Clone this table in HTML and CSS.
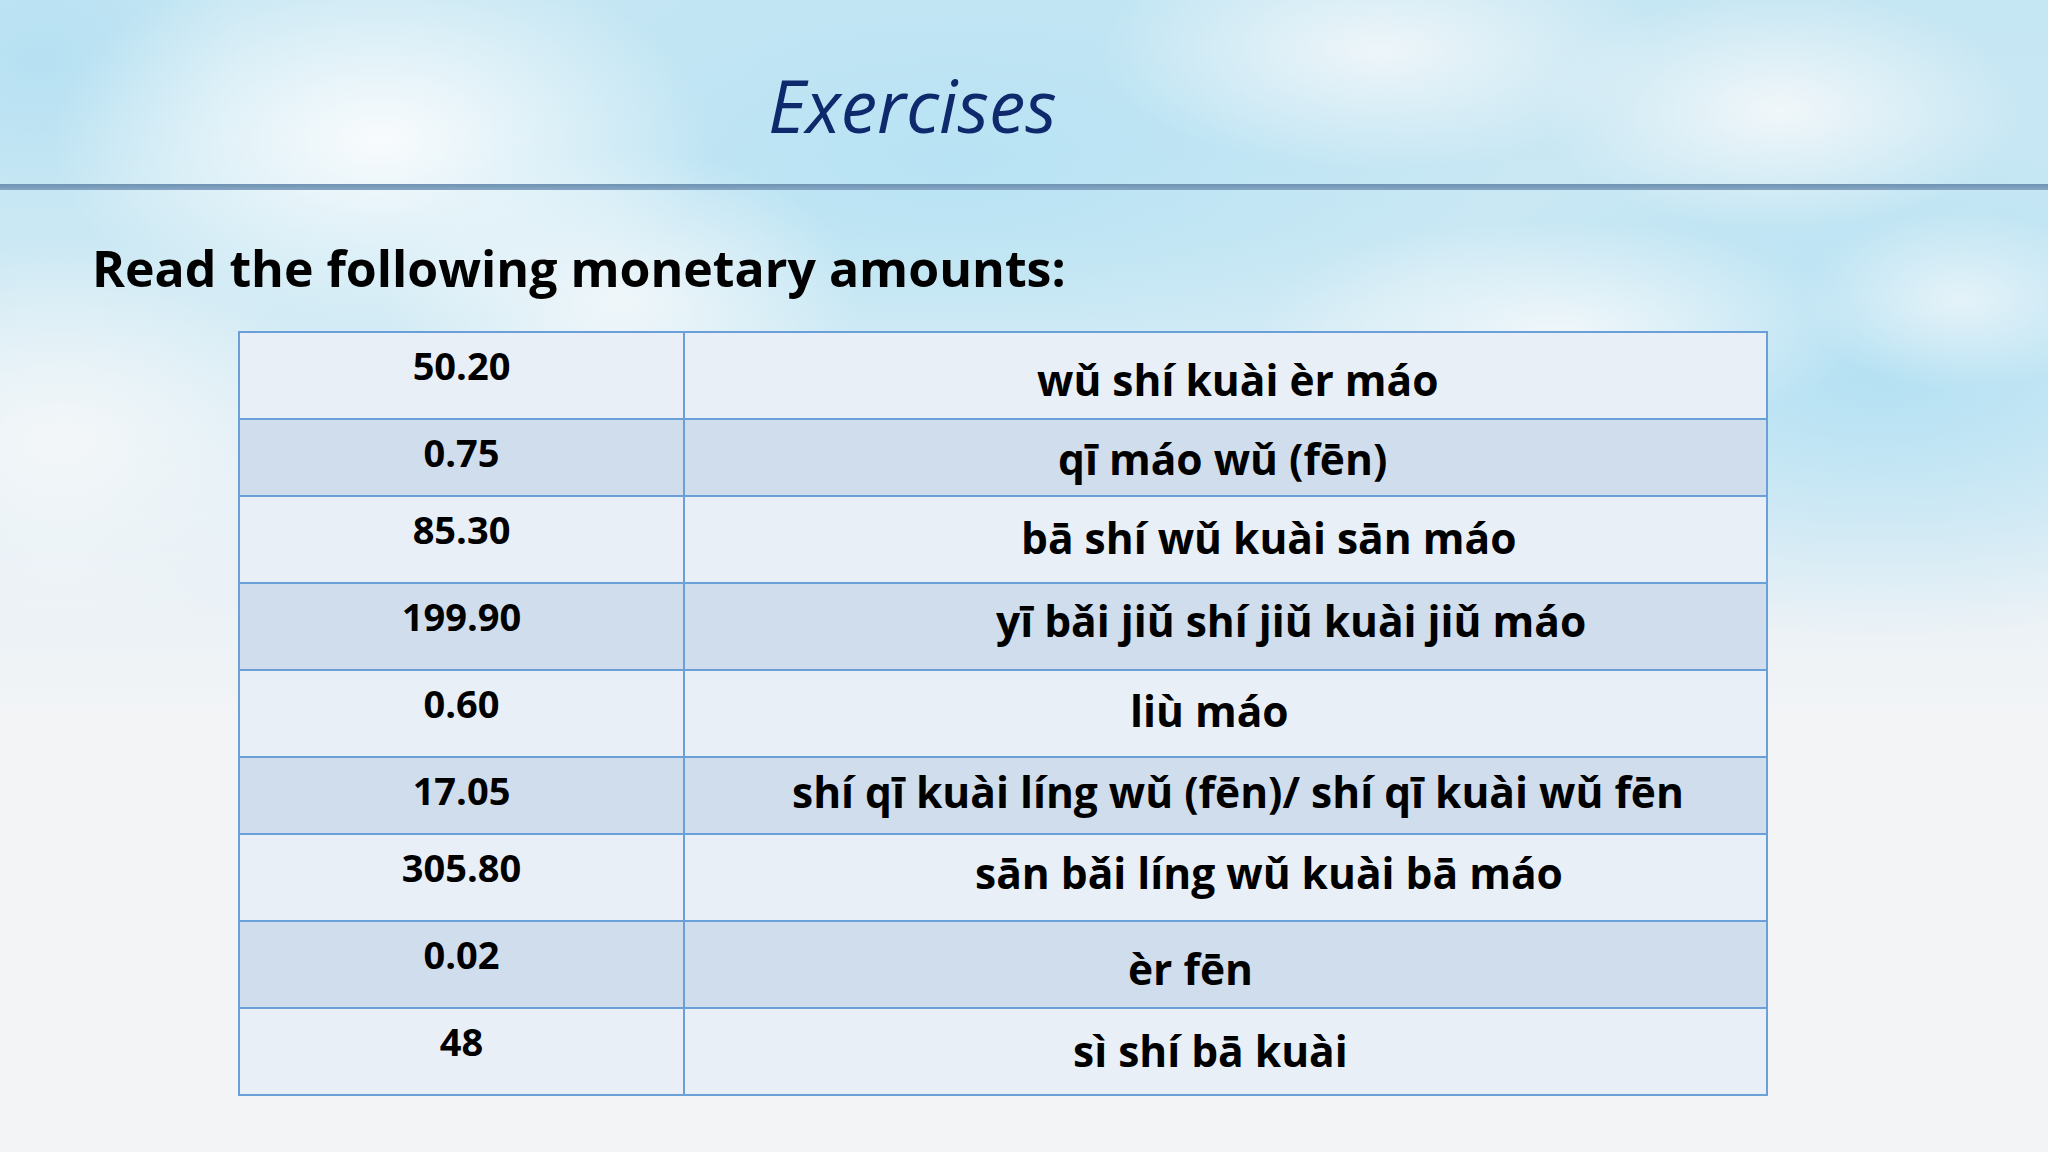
FILE: index.html
```html
<!DOCTYPE html>
<html lang="en">
<head>
<meta charset="utf-8">
<title>Exercises</title>
<link rel="stylesheet" href="styles.css">
</head>
<body>
<div class="slide">
  <header class="head">
    <h1 class="title">Exercises</h1>
  </header>
  <div class="rule"></div>
  <p class="lead">Read the following monetary amounts:</p>
  <table class="amounts">
    <tr class="r1"><td class="num">50.20</td><td class="py">wǔ shí kuài èr máo</td></tr>
    <tr class="r2 alt short"><td class="num">0.75</td><td class="py">qī máo wǔ (fēn)</td></tr>
    <tr class="r3"><td class="num">85.30</td><td class="py">bā shí wǔ kuài sān máo</td></tr>
    <tr class="r4 alt"><td class="num">199.90</td><td class="py">yī bǎi jiǔ shí jiǔ kuài jiǔ máo</td></tr>
    <tr class="r5"><td class="num">0.60</td><td class="py">liù máo</td></tr>
    <tr class="r6 alt short"><td class="num">17.05</td><td class="py">shí qī kuài líng wǔ (fēn)/ shí qī kuài wǔ fēn</td></tr>
    <tr class="r7"><td class="num">305.80</td><td class="py">sān bǎi líng wǔ kuài bā máo</td></tr>
    <tr class="r8 alt"><td class="num">0.02</td><td class="py">èr fēn</td></tr>
    <tr class="r9"><td class="num">48</td><td class="py">sì shí bā kuài</td></tr>
  </table>
</div>
</body>
</html>
```
FILE: styles.css
```css
html, body {
  margin: 0;
  padding: 0;
}
body {
  width: 2048px;
  height: 1152px;
  overflow: hidden;
  font-family: "Open Sans", "Noto Sans", "DejaVu Sans", sans-serif;
  color: #000;
}
.slide {
  width: 2048px;
  height: 1152px;
  box-sizing: border-box;
  background:
    radial-gradient(ellipse 330px 190px at 380px 140px, rgba(250,252,253,0.97), rgba(250,252,253,0) 100%),
    radial-gradient(ellipse 240px 150px at 620px 300px, rgba(246,249,251,0.85), rgba(246,249,251,0) 100%),
    radial-gradient(ellipse 280px 120px at 1380px 50px, rgba(242,247,250,0.9), rgba(242,247,250,0) 100%),
    radial-gradient(ellipse 240px 120px at 1780px 110px, rgba(244,248,250,0.92), rgba(244,248,250,0) 100%),
    radial-gradient(ellipse 300px 110px at 1560px 330px, rgba(246,249,251,0.85), rgba(246,249,251,0) 100%),
    radial-gradient(ellipse 160px 90px at 1960px 300px, rgba(246,249,251,0.7), rgba(246,249,251,0) 100%),
    radial-gradient(ellipse 300px 200px at 60px 440px, rgba(245,247,249,0.95), rgba(245,247,249,0) 100%),
    radial-gradient(ellipse 500px 260px at 1880px 380px, rgba(172,222,242,0.8), rgba(172,222,242,0) 100%),
    radial-gradient(ellipse 560px 220px at 950px 160px, rgba(178,225,243,0.75), rgba(178,225,243,0) 100%),
    radial-gradient(ellipse 200px 160px at 40px 60px, rgba(175,222,242,0.7), rgba(175,222,242,0) 100%),
    linear-gradient(to bottom, #c5e6f3 0%, #cae8f4 20%, #d8edf6 35%, #e9f1f6 50%, #f2f4f6 62%, #f3f4f5 100%);
}
.head {
  padding-top: 68px;
  padding-left: 768px;
}
.title {
  margin: 0;
  font-family: "Open Sans", "Noto Sans", sans-serif;
  font-style: italic;
  font-weight: 400;
  font-size: 73px;
  line-height: 1;
  color: #0f2a6c;
}
.rule {
  margin-top: 43px;
  height: 6px;
  background: linear-gradient(to bottom, #6f93b3, #86a6c3);
}
.lead {
  margin: 53px 0 0 0;
  padding-left: 92px;
  font-weight: 700;
  font-size: 50px;
  line-height: 1;
  color: #000;
}
.amounts {
  margin: 38px 0 0 238px;
  width: 1530px;
  border-collapse: collapse;
  table-layout: fixed;
}
.amounts tr {
  height: 87px;
  background: #e9eff7;
}
.amounts tr.short {
  height: 77px;
}
.amounts tr.alt {
  background: #d0ddec;
}
.amounts td {
  border: 2px solid #6a9fd8;
  vertical-align: top;
  padding: 0;
  line-height: 1;
  font-weight: 700;
  white-space: nowrap;
}
.amounts .num {
  width: 443px;
  text-align: center;
  font-size: 38px;
  padding-top: 13px;
}
.amounts .py {
  text-align: left;
  font-size: 42.5px;
}
.r1 .py { padding: 26px 0 0 352px; }
.r2 .py { padding: 18px 0 0 373px; }
.r3 .py { padding: 20px 0 0 336px; }
.r4 .py { padding: 16px 0 0 311px; }
.r5 .py { padding: 19px 0 0 445px; }
.r6 .py { padding: 13px 0 0 107px; }
.r7 .py { padding: 17px 0 0 290px; }
.r8 .py { padding: 26px 0 0 443px; }
.r9 .py { padding: 21px 0 0 388px; }
```
